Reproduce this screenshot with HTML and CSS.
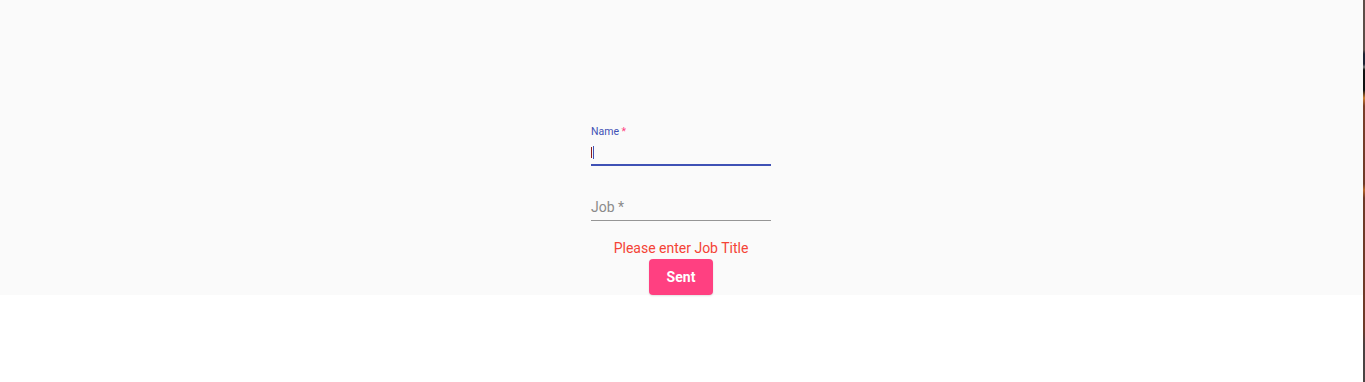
FILE: index.html
```html
<!DOCTYPE html>
<html lang="en">
<head>
<meta charset="utf-8">
<title>Form</title>
<link rel="stylesheet" href="styles.css">
</head>
<body>
<div class="shell">
  <main class="main">
    <section class="page">
      <form class="form">
        <div class="field field-focused">
          <div class="label">Name <span class="req">*</span></div>
          <div class="input-row">
            <span class="caret-mark"></span><span class="caret"></span>
          </div>
        </div>
        <div class="field field-job">
          <div class="input-row">
            <span class="placeholder">Job *</span>
          </div>
        </div>
        <div class="error">Please enter Job Title</div>
        <button type="button" class="btn">Sent</button>
      </form>
    </section>
  </main>
  <div class="edge"></div>
</div>
</body>
</html>
```

FILE: styles.css
```css
html, body {
  margin: 0;
  padding: 0;
  background: #ffffff;
}

body {
  font-family: Roboto, "Liberation Sans", Arial, sans-serif;
  width: 1365px;
  height: 382px;
  overflow: hidden;
}

.shell {
  display: flex;
  height: 382px;
}

.main {
  flex: 1;
  display: flex;
  flex-direction: column;
}

.page {
  background: #fafafa;
  height: 295px;
  display: flex;
  flex-direction: column;
  align-items: center;
}

.form {
  margin-top: 126px;
  margin-right: 1px;
  display: flex;
  flex-direction: column;
  align-items: center;
}

.field {
  width: 180px;
}

.label {
  font-size: 10.5px;
  line-height: 12px;
  height: 12px;
  color: #3f51b5;
}

.req {
  color: #ff4081;
}

.field-focused .input-row {
  display: flex;
  align-items: flex-start;
  height: 18px;
  padding-top: 8px;
  border-bottom: 2px solid #3f51b5;
}

.caret-mark {
  width: 1px;
  height: 11px;
  margin-top: 1px;
  background: #8b1c1c;
}

.caret {
  width: 1px;
  height: 13px;
  margin-left: 1px;
  background: #3f51b5;
}

.field-job {
  margin-top: 33px;
}

.field-job .input-row {
  padding-bottom: 5px;
  border-bottom: 1px solid #959595;
}

.placeholder {
  display: block;
  font-size: 14px;
  line-height: 16px;
  color: #8a8a8a;
}

.error {
  margin-top: 19px;
  font-size: 14px;
  line-height: 16px;
  color: #f44336;
}

.btn {
  margin-top: 3px;
  width: 64px;
  height: 36px;
  padding: 0;
  border: none;
  border-radius: 4px;
  background: #ff4081;
  color: #ffffff;
  font-family: Roboto, "Liberation Sans", Arial, sans-serif;
  font-size: 14px;
  font-weight: 700;
  line-height: 34px;
  box-shadow: 0 1px 2px rgba(0, 0, 0, 0.12);
}

.edge {
  width: 2px;
  height: 382px;
  background: linear-gradient(to bottom,
    #5c4d48 0, #5c4d48 50px,
    #1e2233 54px, #1e2233 64px,
    #777777 67px, #111111 70px, #111111 90px,
    #c87a30 98px, #7a3f2a 106px,
    #6e3a28 184px, #b5652a 190px, #6e3a28 198px,
    #6e3a28 328px, #4a4040 345px, #4a4444 382px);
}
```
